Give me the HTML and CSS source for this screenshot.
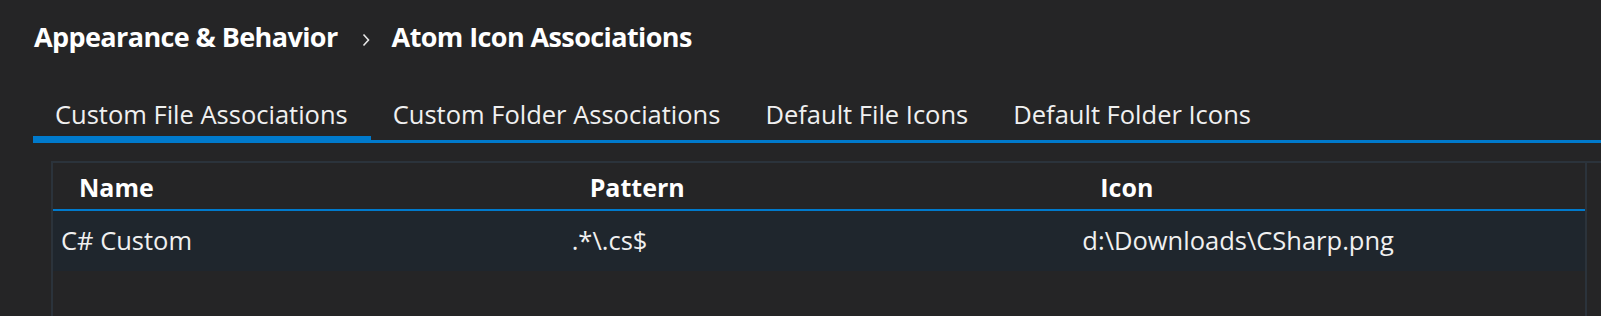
FILE: index.html
```html
<!DOCTYPE html>
<html lang="en">
<head>
    <meta charset="UTF-8">
    <title>Atom Icon Associations</title>
    <link rel="stylesheet" href="styles.css">
</head>
<body>
    <div class="breadcrumb">
        <span class="crumb">Appearance &amp; Behavior</span>
        <svg class="chevron" width="8" height="14" viewBox="0 0 8 14">
            <polyline points="1.5,1.5 6.5,7 1.5,12.5" fill="none" stroke="#e8e8e8" stroke-width="1.6"/>
        </svg>
        <span class="crumb">Atom Icon Associations</span>
    </div>

    <div class="tabs">
        <div class="tab active">Custom File Associations</div>
        <div class="tab">Custom Folder Associations</div>
        <div class="tab">Default File Icons</div>
        <div class="tab">Default Folder Icons</div>
    </div>

    <div class="panel">
        <div class="grid">
            <div class="head">Name</div>
            <div class="head">Pattern</div>
            <div class="head">Icon</div>
            <div class="cell">C# Custom</div>
            <div class="cell">.*\.cs$</div>
            <div class="cell">d:\Downloads\CSharp.png</div>
        </div>
        <div class="scroll-track"></div>
    </div>
</body>
</html>
```

FILE: styles.css
```css
body {
    margin: 0;
    padding: 0;
    background: #252526;
    color: #fff;
    font-family: 'Open Sans', 'Noto Sans', sans-serif;
    height: 100vh;
    overflow: hidden;
    display: flex;
    flex-direction: column;
}
.breadcrumb {
    display: flex;
    align-items: flex-start;
    height: 60px;
    box-sizing: border-box;
    padding: 19px 0 0 34px;
    flex-shrink: 0;
}
.crumb {
    font-size: 27px;
    font-weight: 700;
    line-height: 36px;
    letter-spacing: -0.6px;
}
.chevron {
    margin: 14px 22px 0 24px;
}
.tabs {
    display: flex;
    margin-left: 33px;
    border-bottom: 3px solid #007acc;
    flex-shrink: 0;
}
.tab {
    font-size: 25.5px;
    line-height: 32px;
    padding: 38px 23px 6px 22px;
    color: #f0f0f0;
    border-bottom: 7px solid transparent;
    margin-bottom: -3px;
}
.tab.active {
    border-bottom-color: #007acc;
}
.panel {
    flex: 1;
    min-height: 0;
    display: flex;
    margin: 18px 0 0 51px;
    border-top: 2px solid #2b333b;
    border-left: 2px solid #2b333b;
}
.grid {
    flex: 1;
    display: grid;
    grid-template-columns: repeat(3, 1fr);
    grid-auto-rows: min-content;
    border-right: 2px solid #2b333b;
}
.head {
    font-size: 25px;
    font-weight: 700;
    line-height: 30px;
    padding: 9px 26px 7px;
    border-bottom: 2px solid #007acc;
}
.cell {
    font-size: 25.5px;
    line-height: 30px;
    padding: 14px 8px 16px;
    background: #1f262d;
    color: #f0f0f0;
}
.scroll-track {
    width: 14px;
}
```
